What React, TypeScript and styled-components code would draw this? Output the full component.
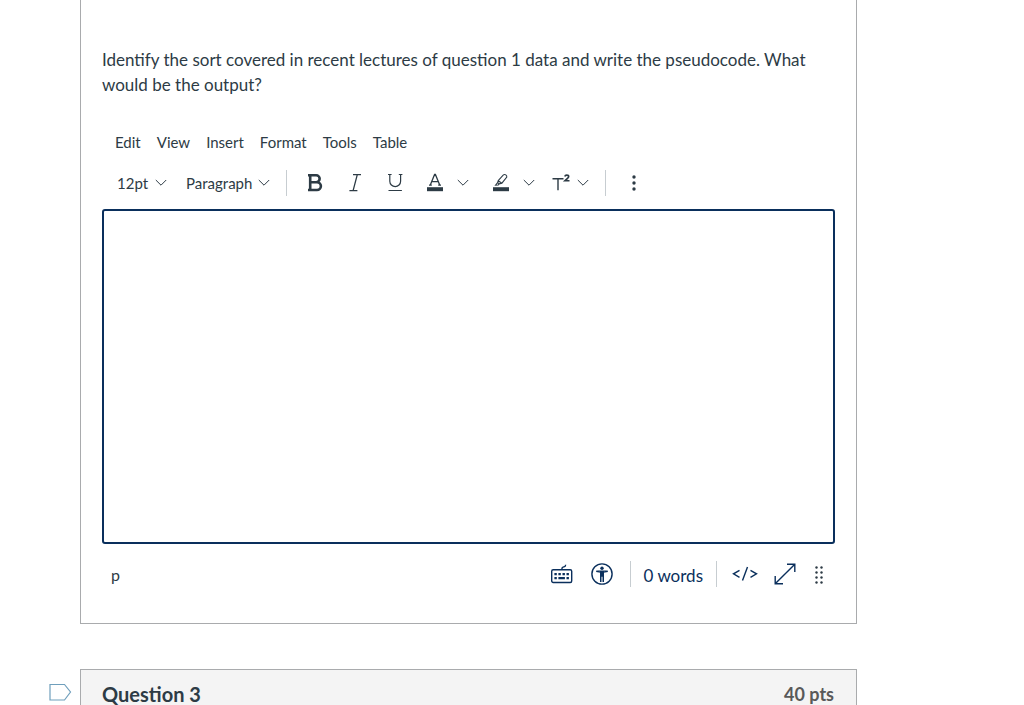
import React from "react";
import styled, { createGlobalStyle } from "styled-components";

const ink = "#2d3b45";
const navy = "#0a2f5c";
const border = "#a9abad";

const GlobalStyle = createGlobalStyle`
  *, *::before, *::after { box-sizing: border-box; }
  body {
    margin: 0;
    background: #fff;
    color: ${ink};
    font-family: Lato, "Open Sans", sans-serif;
  }
  button, select, textarea { font: inherit; color: inherit; }
`;

const Page = styled.main`
  display: flex;
  flex-direction: column;
  gap: 45px;
  min-height: 100vh;
  padding: 0 167px 0 48px;
`;

const QuestionRow = styled.section<{ $fill?: boolean }>`
  display: grid;
  grid-template-columns: 32px minmax(0, 1fr);
  flex: ${(p) => (p.$fill ? "1 0 auto" : "0 0 auto")};
`;

const Card = styled.article<{ $open: "top" | "bottom" }>`
  grid-column: 2;
  border: 1px solid ${border};
  border-${(p) => p.$open}: 0;
`;

const QuestionBody = styled.div`
  padding: 47px 21px 19px;
`;

const Prompt = styled.p`
  margin: 0 0 26px;
  font-size: 17px;
  line-height: 25px;
`;

const MenuBar = styled.nav`
  display: flex;
  align-items: center;
  height: 38px;
  padding-left: 5px;
`;

const MenuButton = styled.button`
  padding: 0 8px;
  border: 0;
  background: none;
  font-size: 15px;
  line-height: 24px;
`;

const Toolbar = styled.div`
  display: flex;
  align-items: center;
  height: 40px;
  margin: 2px 0 6px;
  padding-left: 15px;
`;

const SelectLabel = styled.label<{ $width: number }>`
  display: grid;
  align-items: center;
  width: ${(p) => p.$width}px;

  > * { grid-area: 1 / 1; }
  > svg { justify-self: end; pointer-events: none; }
`;

const Select = styled.select`
  width: 100%;
  padding: 0;
  border: 0;
  background: none;
  appearance: none;
  font-size: 15px;
  line-height: 24px;
`;

const Divider = styled.span`
  flex: none;
  width: 1px;
  height: 26px;
  background: #c7cdd1;
`;

const ToolGroup = styled.div<{ $gap?: number }>`
  display: flex;
  align-items: center;
  margin-left: ${(p) => p.$gap ?? 0}px;
`;

const IconButton = styled.button<{ $width?: number }>`
  display: flex;
  align-items: center;
  justify-content: center;
  width: ${(p) => p.$width ?? 40}px;
  height: 32px;
  padding: 0;
  border: 0;
  background: none;
`;

const Editor = styled.textarea`
  display: block;
  width: 100%;
  height: 335px;
  padding: 12px;
  border: 2px solid ${navy};
  border-radius: 3px;
  outline: 0;
  resize: none;
  background: #fff;
`;

const StatusBar = styled.footer`
  display: flex;
  align-items: center;
  justify-content: space-between;
  height: 60px;
  padding: 0 2px 0 9px;
  color: ${navy};
`;

const ElementPath = styled.span`
  color: ${ink};
  font-size: 16px;
`;

const StatusTools = styled.div`
  display: flex;
  align-items: center;
`;

const WordCount = styled.button`
  padding: 4px 13px 0;
  border: 0;
  background: none;
  font-size: 17px;
  line-height: 24px;
`;

const QuestionHeader = styled.header`
  display: flex;
  justify-content: space-between;
  height: 100%;
  padding: 12px 22px 0 21px;
  background: #f4f4f4;
  line-height: 24px;
`;

const QuestionTitle = styled.h2`
  margin: 0;
  font-size: 20px;
  font-weight: 700;
`;

const Points = styled.span`
  color: #595959;
  font-size: 18px;
  font-weight: 700;
`;

const FlagButton = styled.button`
  align-self: start;
  display: flex;
  width: 24px;
  margin-top: 14px;
  padding: 0;
  border: 0;
  background: none;
`;

const Chevron = () => (
  <svg width="12" height="8" viewBox="0 0 12 8" fill="none" stroke={ink} aria-hidden="true">
    <path d="M.8 1 6 6.2 11.2 1" />
  </svg>
);

const BoldIcon = () => (
  <svg width="18" height="20" viewBox="0 0 18 20" fill="none" stroke={ink} strokeWidth="2.6" aria-hidden="true">
    <path d="M2 2.3h8.2a3.4 3.4 0 0 1 0 6.900H4M4 9.200h7a3.900 3.900 0 0 1 0 7.800H2M4.200 2v15" />
  </svg>
);

const ItalicIcon = () => (
  <svg width="18" height="20" viewBox="0 0 18 20" fill="none" stroke={ink} strokeWidth="1.3" aria-hidden="true">
    <path d="M7 1.6h8M3.4 17.6h8M11.3 1.6 7.1 17.6" />
  </svg>
);

const UnderlineIcon = () => (
  <svg width="18" height="20" viewBox="0 0 18 20" fill="none" stroke={ink} strokeWidth="1.2" aria-hidden="true">
    <path d="M2 1.500h3.600M12.800 1.500h3.600M3.800 1.500v6.700a5.400 5.400 0 0 0 10.800 0V1.500M2.500 17.500h13.400" />
  </svg>
);

const TextColorIcon = () => (
  <svg width="18" height="20" viewBox="0 0 18 20" fill="none" stroke={ink} strokeWidth="1.3" aria-hidden="true">
    <path d="M4.2 12.2 8.6 1.4h.8l4.4 10.8M5.8 8.6h6.4M3 12.2h2.8M12.2 12.2H15" />
    <path d="M1 14.200h16v4H1z" fill={ink} stroke="none" />
  </svg>
);

const HighlightIcon = () => (
  <svg width="18" height="20" viewBox="0 0 18 20" fill="none" stroke={ink} strokeWidth="1.1" aria-hidden="true">
    <path d="M6.2 7.7 11.4 1.9q1.2-.9 2.4 0t1 2.2L9.9 10.2l-2.7.6-1.6-1.2zM6.2 7.7l3.7 2.5M5.6 9.6l-2 2.6 2.6-.2 1-1.2" />
    <path d="M1 14.200h16v4H1z" fill={ink} stroke="none" />
  </svg>
);

const SuperscriptIcon = () => (
  <svg width="18" height="20" viewBox="0 0 18 20" fill="none" stroke={ink} strokeWidth="1.4" aria-hidden="true">
    <path d="M.5 5.700h11M6 5.700v11.600" />
    <path d="M12.800 3.500q.3-1.400 2-1.400 1.900 0 1.900 1.400 0 .9-1.200 1.900l-2.600 2.400h4.600" strokeWidth="1.600" />
  </svg>
);

const MoreIcon = () => (
  <svg width="4" height="16" viewBox="0 0 4 16" fill={ink} aria-hidden="true">
    <circle cx="2" cy="2" r="1.7" />
    <circle cx="2" cy="8" r="1.7" />
    <circle cx="2" cy="14" r="1.7" />
  </svg>
);

const KeyboardIcon = () => (
  <svg width="22" height="22" viewBox="0 0 22 22" fill="none" stroke={navy} strokeWidth="1.4" aria-hidden="true">
    <rect x=".7" y="6.700" width="20" height="12.800" rx="1.500" />
    <path d="M11 6.500V5.200q0-.8 1-1.100l1.600-.5q.9-.3 1-1.900" />
    <path d="M3.400 11.200h2.400M7.400 11.200h2.400M11.500 11.200h2.400M15.500 11.200h2.400M3.400 15.100h2.400M7.400 15.100h6.500M15.500 15.100h2.400" strokeWidth="2.200" />
  </svg>
);

const AccessibilityIcon = () => (
  <svg width="22" height="22" viewBox="0 0 22 22" fill="none" stroke={navy} aria-hidden="true">
    <circle cx="11" cy="11" r="10.1" strokeWidth="1.4" />
    <circle cx="11" cy="5.3" r="1.7" fill={navy} stroke="none" />
    <path d="M5.500 7.600 9 8.500v10.600h1.500v-5.300h1v5.300H13V8.500l3.500-.9" fill={navy} stroke="none" />
    <path d="M5.200 8.200 9.600 9.100h2.800l4.400-.9" strokeWidth="1.400" />
  </svg>
);

const CodeIcon = () => (
  <svg width="26" height="16" viewBox="0 0 26 16" fill="none" stroke={navy} strokeWidth="1.4" aria-hidden="true">
    <path d="M7.500 4.300 1.500 7.800l6 3.500M18.500 4.300l6 3.500-6 3.500M15.500 1l-5 13.500" />
  </svg>
);

const FullscreenIcon = () => (
  <svg width="22" height="22" viewBox="0 0 22 22" fill="none" stroke={navy} strokeWidth="1.400" aria-hidden="true">
    <path d="M1.200 20.800 20.800 1.200M13 1.200h7.800V9M1.200 13v7.800H9" />
  </svg>
);

const GripIcon = () => (
  <svg width="8" height="20" viewBox="0 0 8 20" fill={ink} aria-hidden="true">
    {[3.5, 8.5, 13.5, 18.5].map((y) => (
      <g key={y}>
        <circle cx="1.500" cy={y} r="1.200" />
        <circle cx="6.500" cy={y} r="1.200" />
      </g>
    ))}
  </svg>
);

const FlagIcon = () => (
  <svg width="24" height="18" viewBox="0 0 24 18" fill="#fff" stroke="#6f9fbc" strokeWidth="1.200" aria-hidden="true">
    <path d="M2 1.500h14.500L22.500 9l-6 8H2z" />
  </svg>
);

const menus = ["Edit", "View", "Insert", "Format", "Tools", "Table"];

export default function App() {
  return (
    <>
      <GlobalStyle />
      <Page>
        <QuestionRow>
          <Card $open="top">
            <QuestionBody>
              <Prompt>
                Identify the sort covered in recent lectures of question 1 data and write the
                pseudocode. What would be the output?
              </Prompt>
              <MenuBar aria-label="Editor menu">
                {menus.map((name) => (
                  <MenuButton key={name} type="button">{name}</MenuButton>
                ))}
              </MenuBar>
              <Toolbar role="toolbar" aria-label="Formatting">
                <SelectLabel $width={50}>
                  <Select aria-label="Font size" defaultValue="12pt">
                    <option>12pt</option>
                  </Select>
                  <Chevron />
                </SelectLabel>
                <ToolGroup $gap={19}>
                  <SelectLabel $width={84}>
                    <Select aria-label="Block type" defaultValue="Paragraph">
                      <option>Paragraph</option>
                    </Select>
                    <Chevron />
                  </SelectLabel>
                </ToolGroup>
                <ToolGroup $gap={16}>
                  <Divider />
                </ToolGroup>
                <ToolGroup $gap={8}>
                  <IconButton type="button" aria-label="Bold"><BoldIcon /></IconButton>
                  <IconButton type="button" aria-label="Italic"><ItalicIcon /></IconButton>
                  <IconButton type="button" aria-label="Underline"><UnderlineIcon /></IconButton>
                </ToolGroup>
                <ToolGroup>
                  <IconButton type="button" aria-label="Text color"><TextColorIcon /></IconButton>
                  <IconButton type="button" aria-label="Text color options" $width={16}><Chevron /></IconButton>
                </ToolGroup>
                <ToolGroup $gap={10}>
                  <IconButton type="button" aria-label="Highlight"><HighlightIcon /></IconButton>
                  <IconButton type="button" aria-label="Highlight options" $width={16}><Chevron /></IconButton>
                </ToolGroup>
                <ToolGroup $gap={10}>
                  <IconButton type="button" aria-label="Superscript" $width={28}><SuperscriptIcon /></IconButton>
                  <IconButton type="button" aria-label="Superscript options" $width={16}><Chevron /></IconButton>
                </ToolGroup>
                <ToolGroup $gap={14}>
                  <Divider />
                </ToolGroup>
                <ToolGroup $gap={8}>
                  <IconButton type="button" aria-label="More"><MoreIcon /></IconButton>
                </ToolGroup>
              </Toolbar>
              <Editor aria-label="Answer" />
              <StatusBar>
                <ElementPath>p</ElementPath>
                <StatusTools>
                  <IconButton type="button" aria-label="Keyboard shortcuts"><KeyboardIcon /></IconButton>
                  <IconButton type="button" aria-label="Accessibility checker"><AccessibilityIcon /></IconButton>
                  <ToolGroup $gap={8}><Divider /></ToolGroup>
                  <WordCount type="button">0 words</WordCount>
                  <Divider />
                  <ToolGroup $gap={8}>
                    <IconButton type="button" aria-label="Edit HTML"><CodeIcon /></IconButton>
                    <IconButton type="button" aria-label="Fullscreen"><FullscreenIcon /></IconButton>
                    <IconButton type="button" aria-label="Resize" $width={28}><GripIcon /></IconButton>
                  </ToolGroup>
                </StatusTools>
              </StatusBar>
            </QuestionBody>
          </Card>
        </QuestionRow>
        <QuestionRow $fill>
          <FlagButton type="button" aria-label="Flag question"><FlagIcon /></FlagButton>
          <Card $open="bottom">
            <QuestionHeader>
              <QuestionTitle>Question 3</QuestionTitle>
              <Points>40 pts</Points>
            </QuestionHeader>
          </Card>
        </QuestionRow>
      </Page>
    </>
  );
}
